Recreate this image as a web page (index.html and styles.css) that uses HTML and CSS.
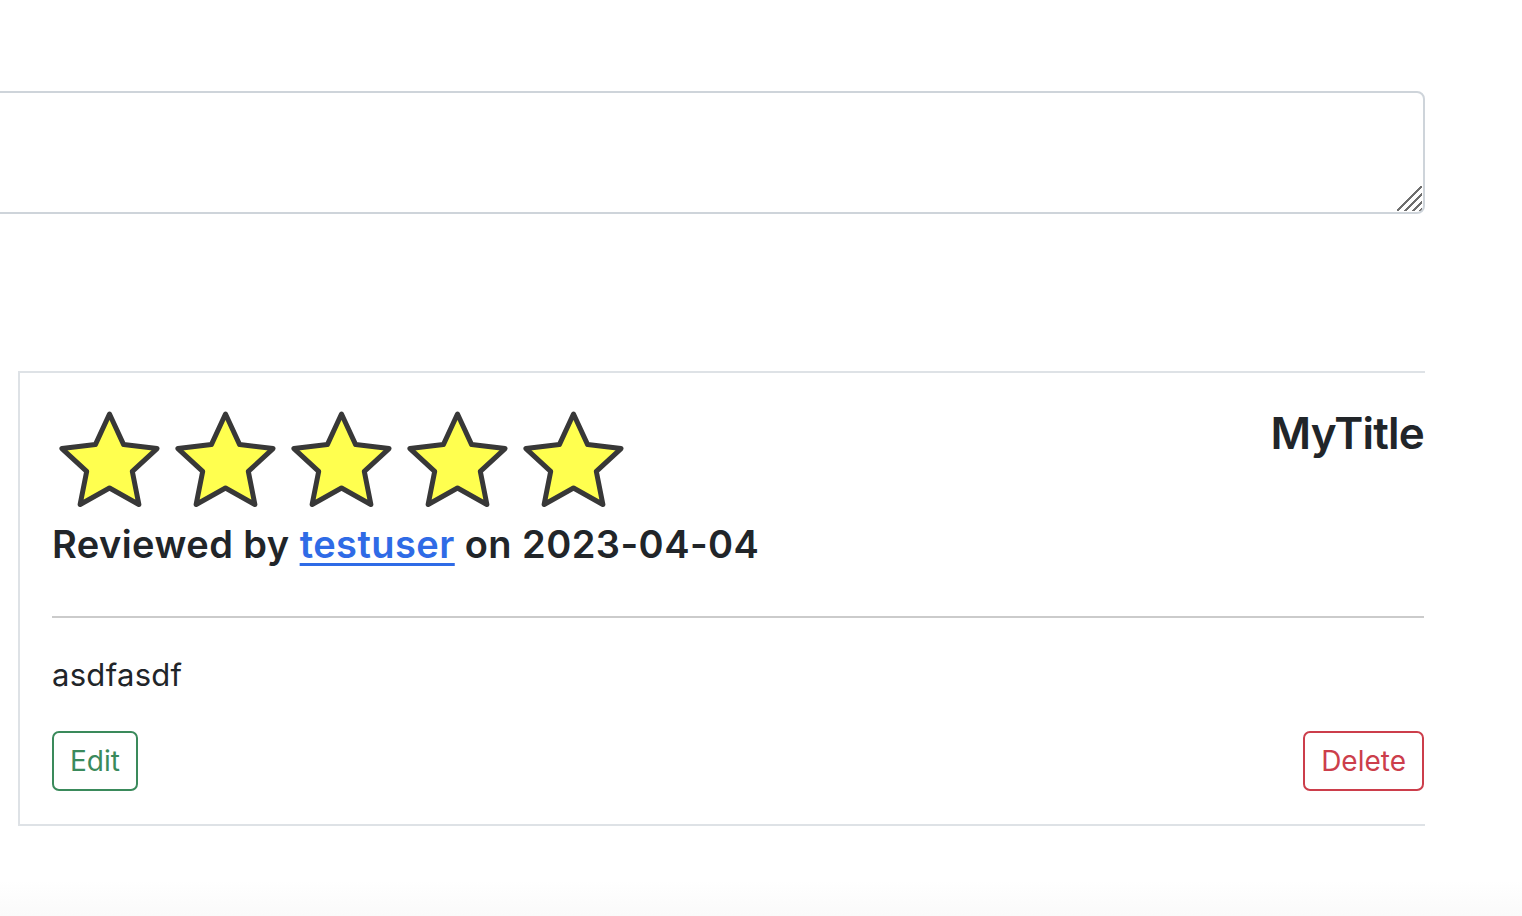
FILE: index.html
```html
<!DOCTYPE html>
<html lang="en">
<head>
<meta charset="utf-8">
<title>Review</title>
<link rel="stylesheet" href="styles.css">
</head>
<body>
<div class="page">
  <textarea class="comment-box" aria-label="Comment"></textarea>

  <div class="review-card">
    <div class="review-head">
      <div class="review-meta">
        <div class="stars">
          <svg class="star" viewBox="0 0 105 97"><polygon points="52.5,3 66.61,33.58 100.05,37.55 75.33,60.42 81.89,93.45 52.5,77 23.11,93.45 29.67,60.42 4.95,37.55 38.39,33.58"/></svg>
          <svg class="star" viewBox="0 0 105 97"><polygon points="52.5,3 66.61,33.58 100.05,37.55 75.33,60.42 81.89,93.45 52.5,77 23.11,93.45 29.67,60.42 4.95,37.55 38.39,33.58"/></svg>
          <svg class="star" viewBox="0 0 105 97"><polygon points="52.5,3 66.61,33.58 100.05,37.55 75.33,60.42 81.89,93.45 52.5,77 23.11,93.45 29.67,60.42 4.95,37.55 38.39,33.58"/></svg>
          <svg class="star" viewBox="0 0 105 97"><polygon points="52.5,3 66.61,33.58 100.05,37.55 75.33,60.42 81.89,93.45 52.5,77 23.11,93.45 29.67,60.42 4.95,37.55 38.39,33.58"/></svg>
          <svg class="star" viewBox="0 0 105 97"><polygon points="52.5,3 66.61,33.58 100.05,37.55 75.33,60.42 81.89,93.45 52.5,77 23.11,93.45 29.67,60.42 4.95,37.55 38.39,33.58"/></svg>
        </div>
        <div class="byline">Reviewed by <a href="#" class="user-link">testuser</a> on 2023-04-04</div>
      </div>
      <h4 class="review-title">MyTitle</h4>
    </div>
    <hr class="divider">
    <p class="review-body">asdfasdf</p>
    <div class="actions">
      <button class="btn btn-edit" type="button">Edit</button>
      <button class="btn btn-delete" type="button">Delete</button>
    </div>
  </div>
</div>
</body>
</html>
```

FILE: styles.css
```css
html, body {
  margin: 0;
  padding: 0;
}

body {
  min-height: 916px;
  background: linear-gradient(to bottom, #ffffff 0, #ffffff 880px, #fafafa 916px);
  font-family: Inter, "Noto Sans", "Liberation Sans", sans-serif;
  color: #212529;
}

.page {
  width: 1425px;
  overflow: hidden;
  padding-top: 91px;
}

.comment-box {
  display: block;
  box-sizing: border-box;
  margin: 0 0 157px -40px;
  width: calc(100% + 40px);
  height: 123px;
  border: 2px solid #ced4da;
  border-radius: 8px;
  resize: none;
  background-color: #fff;
  background-image: linear-gradient(135deg,
    transparent 0, transparent 48%,
    #6e6e6e 48%, #6e6e6e 54%,
    transparent 54%, transparent 64%,
    #6e6e6e 64%, #6e6e6e 70%,
    transparent 70%, transparent 80%,
    #6e6e6e 80%, #6e6e6e 86%,
    transparent 86%, transparent 93%,
    #6e6e6e 93%, #6e6e6e 99%,
    transparent 99%);
  background-size: 25px 25px;
  background-repeat: no-repeat;
  background-position: right 1px bottom 1px;
  font-family: inherit;
  font-size: 28px;
}

.review-card {
  box-sizing: border-box;
  margin-left: 18px;
  width: 1440px;
  border: 2px solid #dee2e6;
  padding: 38px 32px 33px 32px;
  background: #fff;
}

.review-head {
  display: flex;
  justify-content: space-between;
  align-items: flex-start;
}

.stars {
  display: flex;
  gap: 11px;
  margin-left: 5px;
}

.star {
  display: block;
  width: 105px;
  height: 97px;
}

.star polygon {
  fill: #ffff4f;
  stroke: #383838;
  stroke-width: 5;
  stroke-linejoin: round;
}

.byline {
  margin-top: 14px;
  font-size: 38px;
  font-weight: 600;
  line-height: 1.2;
  letter-spacing: 0.45px;
}

.user-link {
  color: #2f6be6;
  text-decoration: underline;
  text-decoration-thickness: 3px;
  text-underline-offset: 5px;
}

.review-title {
  margin: -4px 0 0 0;
  font-size: 44px;
  font-weight: 600;
  line-height: 1.2;
  letter-spacing: -0.8px;
}

.divider {
  margin: 48px 0 0 0;
  border: 0;
  border-top: 2px solid #cbcbcb;
}

.review-body {
  margin: 34px 0 0 0;
  font-size: 31px;
  line-height: 1.5;
  letter-spacing: 0.3px;
}

.actions {
  display: flex;
  justify-content: space-between;
  margin-top: 33px;
}

.btn {
  box-sizing: border-box;
  height: 60px;
  padding: 0 16px;
  background: #fff;
  border: 2px solid;
  border-radius: 7px;
  font-family: inherit;
  font-size: 28px;
  line-height: 1;
  cursor: pointer;
}

.btn-edit {
  color: #3a8a5b;
  border-color: #3a8a5b;
}

.btn-delete {
  color: #cc3e4b;
  border-color: #cc3e4b;
}
```
